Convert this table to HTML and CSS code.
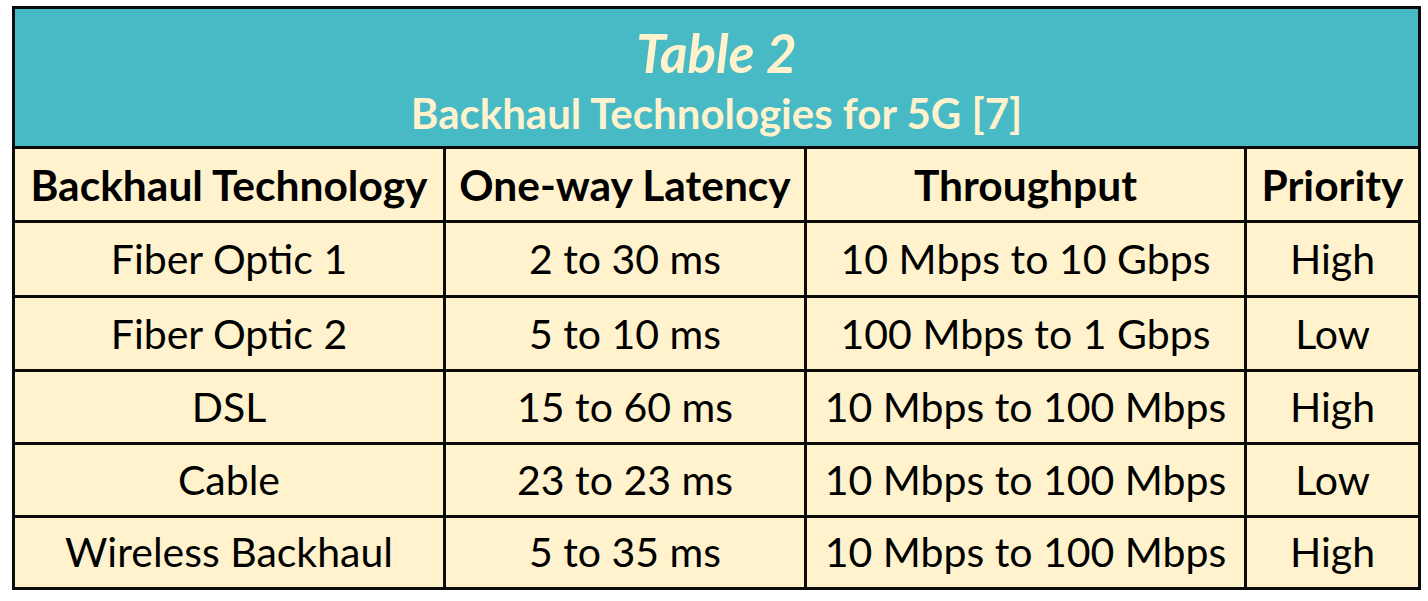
FILE: index.html
```html
<!DOCTYPE html>
<html>
<head>
<meta charset="utf-8">
<link rel="stylesheet" href="styles.css">
</head>
<body>
<table class="tbl">
  <colgroup>
    <col class="c1"><col class="c2"><col class="c3"><col class="c4">
  </colgroup>
  <tr class="title-row">
    <td colspan="4">
      <div class="t1">Table 2</div>
      <div class="t2">Backhaul Technologies for 5G [7]</div>
    </td>
  </tr>
  <tr class="head">
    <th>Backhaul Technology</th><th>One-way Latency</th><th>Throughput</th><th>Priority</th>
  </tr>
  <tr class="r r1"><td>Fiber Optic 1</td><td>2 to 30 ms</td><td>10 Mbps to 10 Gbps</td><td>High</td></tr>
  <tr class="r r2"><td>Fiber Optic 2</td><td>5 to 10 ms</td><td>100 Mbps to 1 Gbps</td><td>Low</td></tr>
  <tr class="r r3"><td>DSL</td><td>15 to 60 ms</td><td>10 Mbps to 100 Mbps</td><td>High</td></tr>
  <tr class="r r4"><td>Cable</td><td>23 to 23 ms</td><td>10 Mbps to 100 Mbps</td><td>Low</td></tr>
  <tr class="r r5"><td>Wireless Backhaul</td><td>5 to 35 ms</td><td>10 Mbps to 100 Mbps</td><td>High</td></tr>
</table>
</body>
</html>
```

FILE: styles.css
```css
html, body {
  margin: 0;
  padding: 0;
  background: #ffffff;
}
body {
  font-family: "Lato", "Open Sans", sans-serif;
}
.tbl {
  margin: 6px 0 0 12px;
  width: 1406px;
  border-collapse: collapse;
  table-layout: fixed;
}
.c1 { width: 431px; }
.c2 { width: 361px; }
.c3 { width: 440px; }
.c4 { width: 174px; }
.tbl td, .tbl th {
  border: 3px solid #0a0a0a;
  padding: 0;
  text-align: center;
  vertical-align: middle;
  color: #000;
  background: #fff2cc;
}
.title-row td {
  background: #47bac6;
  height: 140px;
  color: #fff2cc;
  padding-top: 10px;
  box-sizing: border-box;
}
.t1 {
  font-style: italic;
  font-weight: 700;
  font-size: 53px;
  line-height: 60px;
}
.t2 {
  font-weight: 700;
  font-size: 42px;
  line-height: 60px;
}
.head th {
  height: 71px;
  font-weight: 700;
  font-size: 42.5px;
  line-height: 50px;
}
.r td {
  height: 70px;
  font-size: 41px;
  line-height: 50px;
  font-weight: 400;
}
.r1 td { height: 72px; }
.r2 td { height: 71px; }
.r5 td { height: 68.5px; }
```
